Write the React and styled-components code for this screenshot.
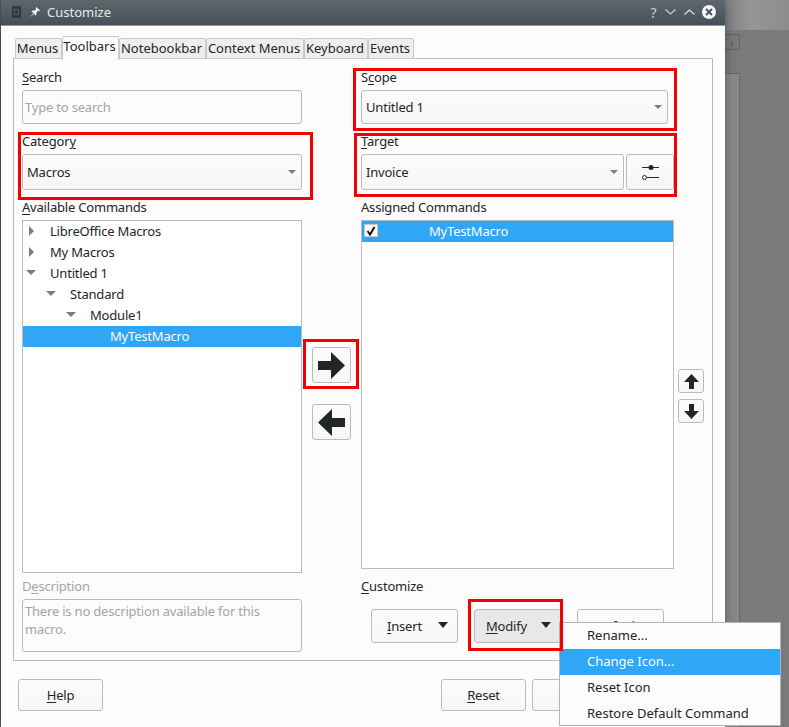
import React from "react";
import styled, { createGlobalStyle, css } from "styled-components";

const GlobalStyle = createGlobalStyle`
  html, body {
    margin: 0;
    padding: 0;
    background: #7a7a7a;
  }
  body {
    font-family: "Noto Sans", "Open Sans", sans-serif;
    font-size: 13px;
    letter-spacing: -0.2px;
    color: #232627;
  }
  * {
    box-sizing: border-box;
  }
`;

const Desktop = styled.div`
  display: flex;
  width: 789px;
  height: 727px;
  overflow: hidden;
  background: #5a5a5a;
`;

const Dialog = styled.div`
  position: relative;
  z-index: 1;
  display: flex;
  flex-direction: column;
  width: 724px;
  margin-left: 1px;
  background: #fcfcfc;
  box-shadow: 0 0 10px rgba(0, 0, 0, 0.35);
`;

const TitleBar = styled.div`
  display: flex;
  align-items: center;
  height: 26px;
  padding: 0 9px 1px 11px;
  background: linear-gradient(#5e676e, #475057);
  border-bottom: 1px solid #3daee9;
  color: #e6e9eb;
  letter-spacing: 0;
`;

const AppIcon = styled.div`
  display: flex;
  align-items: center;
  justify-content: center;
  width: 9px;
  height: 12px;
  background: #33383b;
  border-radius: 1px;
`;

const TitleText = styled.span`
  margin-left: 7px;
  flex: 1;
  line-height: 18px;
`;

const TitleHelp = styled.span`
  width: 19px;
  margin-right: -2px;
  text-align: center;
  font-size: 14px;
  color: #c8cdd0;
`;

const TitleSvg = styled.svg`
  display: block;
  flex: none;
  margin-left: ${({ $gap }) => $gap || 0}px;
`;

const Tabs = styled.div`
  position: relative;
  z-index: 1;
  display: flex;
  align-items: flex-end;
  height: 24px;
  margin: 10px 0 -2px 14px;
`;

const Tab = styled.div`
  width: ${({ $w }) => $w}px;
  height: ${({ $active }) => ($active ? 24 : 21)}px;
  margin-bottom: ${({ $active }) => ($active ? 0 : 1)}px;
  padding-right: 2px;
  background: ${({ $active }) => ($active ? "#fcfcfc" : "#eeeeee")};
  border: 1px solid #c9caca;
  border-bottom: ${({ $active }) => ($active ? "none" : "1px solid #c9caca")};
  border-radius: 2px 2px 0 0;
  line-height: 19px;
  letter-spacing: 0;
  text-align: center;
  white-space: nowrap;
`;

const Panel = styled.div`
  display: grid;
  grid-template-columns: 280px 59px 313px 30px;
  grid-template-rows: 64px 66px 379px 83px;
  width: 700px;
  height: 603px;
  margin-left: 12px;
  padding: 9px 0 0 8px;
  background: #fcfcfc;
  border: 1px solid #b9bbbc;
`;

const Field = styled.div`
  position: relative;
  grid-column: ${({ $col }) => $col};
  display: flex;
  flex-direction: column;
`;

// red marker drawn around a control in the screenshot
const marked = css`
  &::after {
    content: "";
    position: absolute;
    z-index: 6;
    inset: ${({ $inset }) => $inset};
    border: 3px solid #f40000;
    pointer-events: none;
  }
`;

const MarkedField = styled(Field)`
  ${marked}
`;

const MarkedSlot = styled.div`
  position: relative;
  ${marked}
`;

const Label = styled.div`
  height: 18px;
  margin-bottom: 4px;
  line-height: 18px;
  color: ${({ $off }) => ($off ? "#a3a5a6" : "inherit")};
`;

const Mn = styled.span`
  text-decoration: underline;
  text-underline-offset: 2px;
`;

const TextBox = styled.div`
  height: ${({ $h }) => $h}px;
  padding: 2px;
  background: #fcfcfc;
  border: 1px solid #b9bbbc;
  border-radius: 3px;
  color: #a3a5a6;
  line-height: 18px;
  white-space: pre-line;
`;

const SearchBox = styled(TextBox)`
  line-height: 28px;
`;

const Select = styled.div`
  display: flex;
  align-items: center;
  justify-content: space-between;
  width: ${({ $w }) => $w}px;
  height: ${({ $h }) => $h}px;
  padding: 0 5px 0 4px;
  background: linear-gradient(#fcfcfc, #f6f6f6);
  border: 1px solid #b9bbbc;
  border-radius: 3px;
`;

const SelectCaret = styled.i`
  display: block;
  width: 0;
  height: 0;
  border-style: solid;
  border-width: 4px 4px 0 4px;
  border-color: #7b7d7e transparent transparent;
`;

const TreeCaret = styled(SelectCaret)`
  border-width: 5px 5px 0 5px;
`;

const ButtonCaret = styled.i`
  display: block;
  width: 0;
  height: 0;
  margin-top: -2px;
  border-style: solid;
  border-width: 6px 5.5px 0 5.5px;
  border-color: #232627 transparent transparent;
`;

const SelectRow = styled.div`
  display: flex;
  gap: 2px;
`;

const IconButton = styled.div`
  display: flex;
  align-items: center;
  justify-content: center;
  flex: none;
  width: ${({ $w }) => $w}px;
  height: ${({ $h }) => $h}px;
  background: linear-gradient(#fcfcfc, #f6f6f6);
  border: 1px solid #b9bbbc;
  border-radius: 3px;
`;

const List = styled.div`
  height: ${({ $h }) => $h}px;
  background: #fff;
  border: 1px solid #b9bbbc;
`;

const Row = styled.div`
  display: flex;
  align-items: center;
  height: 21px;
  padding: 0 0 2px ${({ $pad }) => $pad}px;
  background: ${({ $on }) => ($on ? "#30a6f6" : "transparent")};
  color: ${({ $on }) => ($on ? "#fcfcfc" : "inherit")};
  white-space: nowrap;
`;

const TreeToggle = styled.span`
  display: flex;
  justify-content: center;
  width: 10px;
  margin-right: 14px;
`;

const CaretRight = styled.i`
  display: block;
  width: 0;
  height: 0;
  border-style: solid;
  border-width: 5px 0 5px 5px;
  border-color: transparent transparent transparent #7b7d7e;
`;

const Check = styled.span`
  display: flex;
  align-items: center;
  justify-content: center;
  width: 14px;
  height: 13px;
  margin-right: 51px;
  background: #fcfcfc;
  border: 1px solid #c4c6c7;
`;

const MoveColumn = styled.div`
  grid-column: 2;
  display: flex;
  flex-direction: column;
  align-items: center;
  gap: 21px;
  padding-top: 149px;
`;

const OrderColumn = styled.div`
  grid-column: 4;
  display: flex;
  flex-direction: column;
  align-items: flex-end;
  gap: 6px;
  padding-top: 171px;
`;

const ButtonRow = styled.div`
  display: flex;
  gap: 16px;
  padding: 10px 0 0 10px;
`;

const MenuButton = styled.div`
  position: relative;
  display: flex;
  align-items: center;
  justify-content: ${({ $plain }) => ($plain ? "center" : "space-between")};
  width: 87px;
  height: 34px;
  padding: 0 ${({ $plain }) => ($plain ? 0 : 9)}px 0 ${({ $left }) => $left || 0}px;
  background: ${({ $down }) => ($down ? "#e8e8e8" : "linear-gradient(#fcfcfc, #f6f6f6)")};
  border: 1px solid #b9bbbc;
  border-radius: 3px;
`;

const PopupMenu = styled.div`
  position: absolute;
  z-index: 5;
  left: 84px;
  top: 12px;
  width: 222px;
  height: 104px;
  background: #fcfcfc;
  border: 1px solid #b0b2b3;
  letter-spacing: 0;
`;

const MenuItem = styled.div`
  height: 26px;
  padding-left: 27px;
  background: ${({ $on }) => ($on ? "#30a6f6" : "transparent")};
  color: ${({ $on }) => ($on ? "#fcfcfc" : "inherit")};
  line-height: 25px;
  white-space: nowrap;
`;

const Footer = styled.div`
  display: flex;
  align-items: flex-start;
  padding: 18px 17px 0 17px;
`;

const FooterButton = styled.div`
  width: 85px;
  height: 32px;
  margin-left: ${({ $gap }) => $gap || 0}px;
  background: linear-gradient(#fcfcfc, #f6f6f6);
  border: 1px solid #b9bbbc;
  border-radius: 3px;
  line-height: 30px;
  text-align: center;
`;

const Behind = styled.div`
  flex: 1;
  display: flex;
  flex-direction: column;
  background: #7a7a7a;
`;

const Band = styled.div`
  height: 30px;
  background: linear-gradient(90deg, #808080, #969696 40%, #8c8c8c);
`;

const RulerStub = styled.div`
  display: flex;
  align-items: center;
  justify-content: center;
  width: 15px;
  height: 16px;
  margin-top: 4px;
  border: 1px solid #646464;
  border-left: none;
  color: #444;
  font-size: 8px;
`;

const PageStub = styled.div`
  flex: 1;
  width: 15px;
  margin-top: 23px;
  background: #888888;
  border-top: 1px solid #666;
  border-right: 1px solid #666;
`;

const BigArrow = ({ flip }) => (
  <svg width="27" height="27" viewBox="0 0 27 27" style={flip ? { transform: "scaleX(-1)" } : undefined}>
    <polygon points="0,9 13,9 13,0 27,13.5 13,27 13,18 0,18" fill="#232627" />
  </svg>
);

const SmallArrow = ({ flip }) => (
  <svg width="15" height="15" viewBox="0 0 15 15" style={flip ? { transform: "scaleY(-1)" } : undefined}>
    <polygon points="7.5,0 15,8 10,8 10,15 5,15 5,8 0,8" fill="#232627" />
  </svg>
);

const tree = [
  { text: "LibreOffice Macros", pad: 3, toggle: "right" },
  { text: "My Macros", pad: 3, toggle: "right" },
  { text: "Untitled 1", pad: 3, toggle: "down" },
  { text: "Standard", pad: 23, toggle: "down" },
  { text: "Module1", pad: 43, toggle: "down" },
  { text: "MyTestMacro", pad: 87, on: true },
];

const tabs = [
  { title: "Menus", w: 47 },
  { title: "Toolbars", w: 57, active: true },
  { title: "Notebookbar", w: 87 },
  { title: "Context Menus", w: 98 },
  { title: "Keyboard", w: 64 },
  { title: "Events", w: 46 },
];

const menuItems = ["Rename...", "Change Icon...", "Reset Icon", "Restore Default Command"];

const App = () => {
  return (
    <Desktop>
      <GlobalStyle />
      <Dialog>
        <TitleBar>
          <AppIcon>
            <svg width="5" height="6" viewBox="0 0 5 6">
              <rect x="0.5" y="0.5" width="4" height="5" fill="none" stroke="#565c60" />
            </svg>
          </AppIcon>
          <TitleSvg $gap={10} width="9" height="10" viewBox="0 0 9 10">
            <path d="M5.4 0 9 3.6 8 4.2 6.8 3.8 5.2 6.2 5.6 7.8 4.6 8.4 2.9 6.6 0.4 9.6 0 9.2 2.4 6.1 0.6 4.4 1.2 3.4 2.8 3.8 5.2 2.2 4.8 1z" fill="#f4f5f6" />
          </TitleSvg>
          <TitleText>Customize</TitleText>
          <TitleHelp>?</TitleHelp>
          <TitleSvg $gap={3} width="13" height="8" viewBox="0 0 13 8">
            <polyline points="1.5,1.5 6.5,6 11.5,1.5" fill="none" stroke="#c8cdd0" strokeWidth="1.2" />
          </TitleSvg>
          <TitleSvg $gap={6} width="13" height="8" viewBox="0 0 13 8">
            <polyline points="1.5,6.5 6.5,2 11.5,6.5" fill="none" stroke="#dfe2e4" strokeWidth="1.2" />
          </TitleSvg>
          <TitleSvg $gap={6} width="14" height="14" viewBox="0 0 14 14">
            <circle cx="7" cy="7" r="7" fill="#f4f5f6" />
            <path d="M4 4 10 10M10 4 4 10" stroke="#475057" strokeWidth="1.8" />
          </TitleSvg>
        </TitleBar>

        <Tabs>
          {tabs.map(({ title, w, active }) => (
            <Tab key={title} $w={w} $active={active}>
              {title}
            </Tab>
          ))}
        </Tabs>

        <Panel>
          <Field $col={1}>
            <Label>
              <Mn>S</Mn>earch
            </Label>
            <SearchBox $h={34}>Type to search</SearchBox>
          </Field>
          <MarkedField $col={3} $inset="0 -3px 1px -8px">
            <Label>
              S<Mn>c</Mn>ope
            </Label>
            <Select $w={307} $h={34}>
              Untitled 1
              <SelectCaret />
            </Select>
          </MarkedField>

          <MarkedField $col={1} $inset="0 -11px -2px -4px">
            <Label>
              Categor<Mn>y</Mn>
            </Label>
            <Select $w={280} $h={36}>
              Macros
              <SelectCaret />
            </Select>
          </MarkedField>
          <MarkedField $col={3} $inset="1px -3px 1px -7px">
            <Label>
              <Mn>T</Mn>arget
            </Label>
            <SelectRow>
              <Select $w={263} $h={36}>
                Invoice
                <SelectCaret />
              </Select>
              <IconButton $w={48} $h={36}>
                <svg width="17" height="16" viewBox="0 0 17 16">
                  <path d="M0 3.5H17M5 13.5H17" stroke="#232627" strokeWidth="1" />
                  <circle cx="9" cy="3.5" r="2.5" fill="#232627" />
                  <circle cx="2.5" cy="13.5" r="2" fill="#fcfcfc" stroke="#232627" />
                </svg>
              </IconButton>
            </SelectRow>
          </MarkedField>

          <Field $col={1}>
            <Label>
              <Mn>A</Mn>vailable Commands
            </Label>
            <List $h={353}>
              {tree.map(({ text, pad, toggle, on }) => (
                <Row key={text} $pad={pad} $on={on}>
                  {toggle === "right" && (
                    <TreeToggle>
                      <CaretRight />
                    </TreeToggle>
                  )}
                  {toggle === "down" && (
                    <TreeToggle>
                      <TreeCaret />
                    </TreeToggle>
                  )}
                  {text}
                </Row>
              ))}
            </List>
          </Field>
          <MoveColumn>
            <MarkedSlot $inset="-8px -8px -6px -9px">
              <IconButton $w={39} $h={36}>
                <BigArrow />
              </IconButton>
            </MarkedSlot>
            <IconButton $w={39} $h={36}>
              <BigArrow flip />
            </IconButton>
          </MoveColumn>
          <Field $col={3}>
            <Label>
              Assi<Mn>g</Mn>ned Commands
            </Label>
            <List $h={349}>
              <Row $on $pad={2}>
                <Check>
                  <svg width="10" height="10" viewBox="0 0 10 10">
                    <polyline points="1.5,5 4,8.5 8.5,1" fill="none" stroke="#111" strokeWidth="2" />
                  </svg>
                </Check>
                MyTestMacro
              </Row>
            </List>
          </Field>
          <OrderColumn>
            <IconButton $w={26} $h={24}>
              <SmallArrow />
            </IconButton>
            <IconButton $w={26} $h={24}>
              <SmallArrow flip />
            </IconButton>
          </OrderColumn>

          <Field $col={1}>
            <Label $off>
              D<Mn>e</Mn>scription
            </Label>
            <TextBox $h={53}>There is no description available for this{"\n"}macro.</TextBox>
          </Field>
          <Field $col={"3 / 5"}>
            <Label>
              <Mn>C</Mn>ustomize
            </Label>
            <ButtonRow>
              <MenuButton $left={15}>
                <span>
                  <Mn>I</Mn>nsert
                </span>
                <ButtonCaret />
              </MenuButton>
              <MarkedSlot $inset="-10px -2px -8px -6px">
                <MenuButton $down $left={11}>
                  <span>
                    <Mn>M</Mn>odify
                  </span>
                  <ButtonCaret />
                  <PopupMenu>
                    {menuItems.map((item, i) => (
                      <MenuItem key={item} $on={i === 1}>
                        {item}
                      </MenuItem>
                    ))}
                  </PopupMenu>
                </MenuButton>
              </MarkedSlot>
              <MenuButton $plain>
                <span>
                  <Mn>D</Mn>efaults
                </span>
              </MenuButton>
            </ButtonRow>
          </Field>
        </Panel>

        <Footer>
          <FooterButton>
            <Mn>H</Mn>elp
          </FooterButton>
          <FooterButton $gap={338}>
            <Mn>R</Mn>eset
          </FooterButton>
          <FooterButton $gap={6}>
            <Mn>O</Mn>K
          </FooterButton>
          <FooterButton $gap={6}>
            <Mn>C</Mn>ancel
          </FooterButton>
        </Footer>
      </Dialog>
      <Behind>
        <Band />
        <RulerStub>ı</RulerStub>
        <PageStub />
      </Behind>
    </Desktop>
  );
};

export default App;
